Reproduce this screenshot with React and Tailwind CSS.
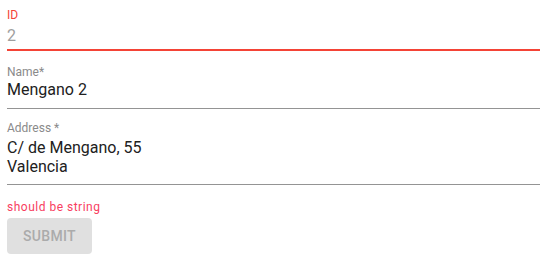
import { useState } from "react"

const App = () => {
  const [formData] = useState({
    id: "2",
    name: "Mengano 2",
    address: "C/ de Mengano, 55\nValencia",
  })

  return (
    <div className="w-[547px] h-[274px] bg-white px-[7px] font-['Roboto',sans-serif]">
      <form className="w-[533px]">
        {/* ID field (error) */}
        <div className="pt-[8px]">
          <label className="block text-[12px] leading-[14px] text-[#f44336]">ID</label>
          <div className="mt-[4px] pb-[4px] border-b-2 border-[#f44336] text-[16px] leading-[19px] text-[#9e9e9e]">
            {formData.id}
          </div>
        </div>

        {/* Name */}
        <div className="pt-[14px]">
          <label className="block text-[12px] leading-[14px] text-[#8a8a8a]">Name*</label>
          <div className="mt-[1px] pb-[9px] border-b border-[#949494] text-[16px] leading-[19px] text-[#212121]">
            {formData.name}
          </div>
        </div>

        {/* Address */}
        <div className="pt-[12px]">
          <label className="block text-[12px] leading-[14px] text-[#8a8a8a]">Address *</label>
          <div className="mt-[3px] pb-[8px] border-b border-[#949494] text-[16px] leading-[19px] text-[#212121] whitespace-pre-line">
            {formData.address}
          </div>
        </div>

        <p className="mt-[15px] text-[12px] leading-[14px] tracking-[0.5px] text-[#f8405f]">should be string</p>

        <button
          type="submit"
          disabled
          className="mt-[4px] h-[36px] px-[16px] rounded-[4px] bg-[#e0e0e0] text-[14px] font-medium text-[#ababab] tracking-[0.3px]"
        >
          SUBMIT
        </button>
      </form>
    </div>
  )
}

export default App
